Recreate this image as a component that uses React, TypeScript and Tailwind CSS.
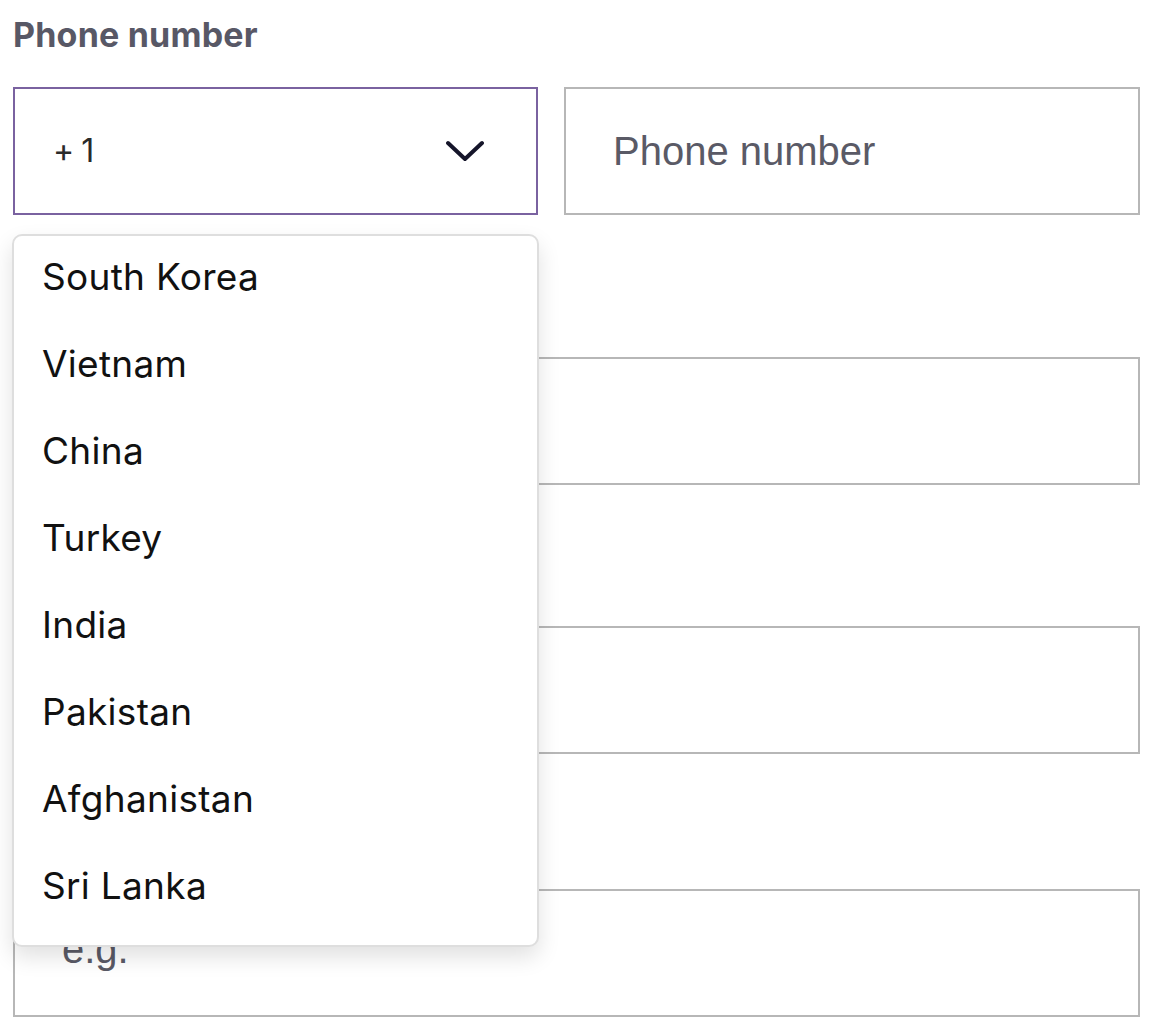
import { useState } from 'react'

const countries = [
  'South Korea',
  'Vietnam',
  'China',
  'Turkey',
  'India',
  'Pakistan',
  'Afghanistan',
  'Sri Lanka',
]

export default function App() {
  const [code] = useState('+1')

  return (
    <div className="relative min-h-[1027px] w-[1151px] bg-white font-['Inter',sans-serif]">
      <div className="pl-[13px] pr-[11px] pt-[14px]">
        {/* Label */}
        <p className="text-[34px] leading-[42px] font-bold tracking-[0.2px] text-[#585866]">Phone number</p>

        {/* Code + number row */}
        <div className="mt-[31px] flex gap-[26px]">
          <div className="flex h-[128px] w-[525px] items-center justify-between border-2 border-[#7a62a0] pl-[38px] pr-[52px]">
            <span className="text-[32px] text-[#2a2a2a] tracking-[-1px]">{code.replace('+', '+ ')}</span>
            <svg width="38" height="22" viewBox="0 0 38 22" fill="none">
              <path d="M2 3 L19 19 L36 3" stroke="#15152a" strokeWidth="4" strokeLinecap="round" strokeLinejoin="round" />
            </svg>
          </div>
          <div className="flex h-[128px] flex-1 items-center border-2 border-[#b7b7b7] pl-[47px]">
            <span className="font-['Liberation_Sans',Arial,sans-serif] text-[40px] text-[#5a5a66]">Phone number</span>
          </div>
        </div>

        {/* Other fields, mostly covered by the menu */}
        <div className="mt-[142px] h-[128px] border-2 border-[#b7b7b7]" />
        <div className="mt-[141px] h-[128px] border-2 border-[#b7b7b7]" />
        <div className="mt-[135px] flex h-[128px] items-start border-2 border-[#b7b7b7] pl-[47px] pt-[34px]">
          <span className="font-['Liberation_Sans',Arial,sans-serif] text-[40px] leading-[48px] text-[#5a5a66]">e.g.</span>
        </div>
      </div>

      {/* Dropdown menu */}
      <div className="absolute left-[12px] top-[234px] h-[713px] w-[527px] rounded-[10px] border-2 border-[#dedede] bg-white shadow-[0_10px_22px_rgba(0,0,0,0.12)]">
        <ul className="-mt-[3px]">
          {countries.map((c) => (
            <li key={c} className="flex h-[87px] items-center pl-[28px] text-[37px] tracking-[0.3px] text-[#111]">
              {c}
            </li>
          ))}
        </ul>
      </div>
    </div>
  )
}
